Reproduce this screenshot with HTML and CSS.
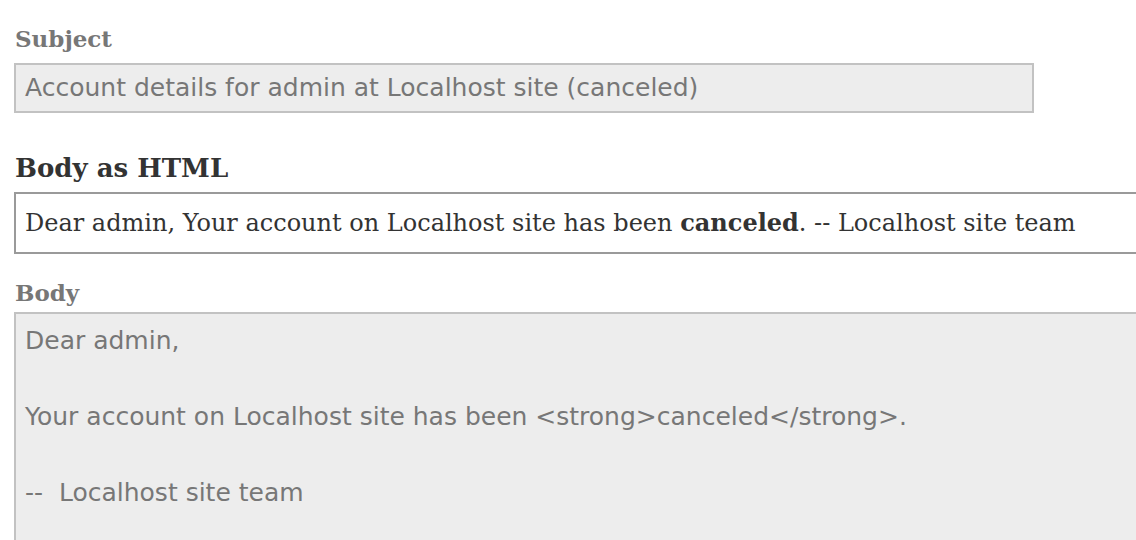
FILE: index.html
```html
<!DOCTYPE html>
<html>
<head>
<meta charset="utf-8">
<link rel="stylesheet" href="styles.css">
</head>
<body>
<div class="form">
  <div class="field field-subject">
    <div class="label label-muted">Subject</div>
    <div class="input input-disabled">Account details for admin at Localhost site (canceled)</div>
  </div>
  <div class="field field-html">
    <div class="label label-strong">Body as HTML</div>
    <div class="html-box">Dear admin, Your account on Localhost site has been <strong>canceled</strong>. -- Localhost site team</div>
  </div>
  <div class="field field-body">
    <div class="label label-muted">Body</div>
    <div class="textarea input-disabled"><p>Dear admin,</p><p>&nbsp;</p><p>Your account on Localhost site has been &lt;strong&gt;canceled&lt;/strong&gt;.</p><p>&nbsp;</p><p>--&nbsp; Localhost site team</p><p>&nbsp;</p></div>
  </div>
</div>
</body>
</html>
```

FILE: styles.css
```css
html, body {
  margin: 0;
  padding: 0;
  background: #ffffff;
  overflow: hidden;
}
.form {
  display: flex;
  flex-direction: column;
  padding: 25px 0 0 14px;
  width: 1200px;
}
.label {
  font-family: "DejaVu Serif", Georgia, serif;
  font-weight: bold;
  font-size: 23px;
  line-height: 28px;
  padding-left: 1px;
}
.label-muted { color: #777777; }
.label-strong { color: #333333; font-size: 26px; line-height: 30px; }
.input-disabled {
  background: #ededed;
  border: 2px solid #c2c2c2;
  color: #777777;
  font-family: "DejaVu Sans", "Lucida Grande", sans-serif;
  font-size: 25px;
}
.input {
  box-sizing: border-box;
  width: 1020px;
  height: 50px;
  margin-top: 10px;
  padding: 0 9px;
  line-height: 46px;
  white-space: nowrap;
}
.field-html { margin-top: 40px; }
.html-box {
  box-sizing: border-box;
  margin-top: 9px;
  height: 62px;
  border: 2px solid #9a9a9a;
  background: #fff;
  color: #333333;
  font-family: "DejaVu Serif", Georgia, serif;
  font-size: 24px;
  line-height: 58px;
  padding: 0 9px;
  white-space: nowrap;
}
.html-box strong { font-weight: bold; }
.field-body { margin-top: 25px; }
.textarea {
  margin-top: 5px;
  height: 300px;
  padding: 8px 9px;
  line-height: 38px;
}
.textarea p { margin: 0; white-space: nowrap; }
```
